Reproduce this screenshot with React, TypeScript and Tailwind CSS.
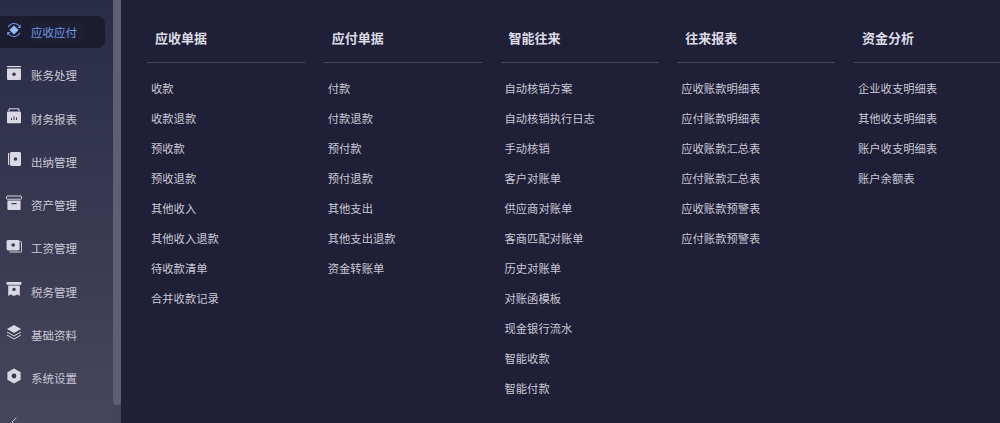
import { ChevronLeft } from 'lucide-react'
import type { ReactNode } from 'react'

const font = { fontFamily: '"Noto Sans CJK SC", "Liberation Sans", sans-serif' }
const ic = '#d9d8e4'
const bg = '#3a3a52'

// sidebar icons, all drawn on a 16x16 box
const icons: Record<string, ReactNode> = {
  active: (
    <>
      <path d="M2.2 5.4A6.6 6.6 0 0 1 13.6 4.2M13.8 10.6A6.6 6.6 0 0 1 2.4 11.8" fill="none" stroke="#6f95e8" strokeWidth="1.1" />
      <path d="M14.8 2.4V6H11.4ZM1.2 13.6V10H4.6Z" fill="#6f95e8" />
      <path d="M8 3.4 12.6 8 8 12.6 3.4 8Z" fill="#9cbcfc" />
    </>
  ),
  account: (
    <>
      <rect x="1" y="1" width="14" height="1.2" fill={ic} />
      <rect x="1" y="3.4" width="14" height="11.6" rx="1" fill={ic} />
      <circle cx="8" cy="9.2" r="1.8" fill={bg} />
    </>
  ),
  report: (
    <>
      <path d="M3 3V1.6A1 1 0 0 1 4 .8h8a1 1 0 0 1 1 .8V3" fill="none" stroke={ic} strokeWidth="1.1" />
      <rect x="1" y="3.6" width="14" height="11.6" rx="1" fill={ic} />
      <path d="M5.5 12V10M8 12V8.4M10.5 12V9.4" stroke={bg} strokeWidth="1" />
    </>
  ),
  cashier: (
    <>
      <rect x="4" y="1" width="11" height="14" rx="1.4" fill={ic} />
      <path d="M2.6 2v12" stroke={ic} strokeWidth="1.2" />
      <circle cx="9.5" cy="8" r="1.8" fill={bg} />
    </>
  ),
  asset: (
    <>
      <rect x="0.6" y="1" width="14.8" height="3.2" rx="0.6" fill="none" stroke={ic} strokeWidth="1" />
      <path d="M1.4 5.4h13.2V14a1 1 0 0 1-1 1H2.4a1 1 0 0 1-1-1Z" fill={ic} />
      <path d="M5.5 8.6h5" stroke={bg} strokeWidth="1.2" />
    </>
  ),
  salary: (
    <>
      <path d="M14 3.4h.6a1 1 0 0 1 1 1V13a1 1 0 0 1-1 1H3.4" fill="none" stroke={ic} strokeWidth="1" />
      <rect x="0.6" y="2" width="13" height="10.4" rx="1.4" fill={ic} />
      <circle cx="7.2" cy="7" r="1.8" fill={bg} />
    </>
  ),
  tax: (
    <>
      <rect x="0.6" y="1" width="14.8" height="2.8" fill={ic} />
      <path d="M2.2 4.6h11.6V15l-2.4-1.4L8 15l-3.4-1.4L2.2 15Z" fill={ic} />
      <circle cx="8" cy="8.4" r="1.7" fill={bg} />
    </>
  ),
  base: (
    <>
      <path d="M8 1 15 5 8 9 1 5Z" fill={ic} />
      <path d="M1 8l7 4 7-4M1 11l7 4 7-4" fill="none" stroke={ic} strokeWidth="1" />
    </>
  ),
  setting: (
    <>
      <path d="M8 .6 14.6 4.2V11.8L8 15.4 1.4 11.8V4.2Z" fill={ic} />
      <circle cx="8" cy="8" r="2.4" fill={bg} />
    </>
  ),
}

const menu = [
  { id: 'active', label: '应收应付' },
  { id: 'account', label: '账务处理' },
  { id: 'report', label: '财务报表' },
  { id: 'cashier', label: '出纳管理' },
  { id: 'asset', label: '资产管理' },
  { id: 'salary', label: '工资管理' },
  { id: 'tax', label: '税务管理' },
  { id: 'base', label: '基础资料' },
  { id: 'setting', label: '系统设置' },
]

const columns = [
  { title: '应收单据', items: ['收款', '收款退款', '预收款', '预收退款', '其他收入', '其他收入退款', '待收款清单', '合并收款记录'] },
  { title: '应付单据', items: ['付款', '付款退款', '预付款', '预付退款', '其他支出', '其他支出退款', '资金转账单'] },
  { title: '智能往来', items: ['自动核销方案', '自动核销执行日志', '手动核销', '客户对账单', '供应商对账单', '客商匹配对账单', '历史对账单', '对账函模板', '现金银行流水', '智能收款', '智能付款'] },
  { title: '往来报表', items: ['应收账款明细表', '应付账款明细表', '应收账款汇总表', '应付账款汇总表', '应收账款预警表', '应付账款预警表'] },
  { title: '资金分析', items: ['企业收支明细表', '其他收支明细表', '账户收支明细表', '账户余额表'] },
]

export default function App() {
  return (
    <div className="flex h-[423px] w-[1000px] overflow-hidden bg-[#1f2037]" style={font}>
      {/* Sidebar */}
      <aside className="flex w-[113px] shrink-0 flex-col bg-gradient-to-b from-[#2a2b46] to-[#46465c] pt-4">
        {menu.map((item, i) => (
          <div key={item.id} className={`mb-[11.25px] flex h-8 w-[105px] shrink-0 items-center rounded-r-lg pl-[6px] ${i === 0 ? 'bg-[#1c1c30]' : ''}`}>
            <svg viewBox="0 0 16 16" className="mb-[5px] h-4 w-4 shrink-0">{icons[item.id]}</svg>
            <span className={`ml-[9px] rounded-r-lg pr-2 text-[11.5px] leading-[20px] ${i === 0 ? 'bg-[#1f1f33] text-[#6f97ea]' : 'text-[#c9c8d4]'}`}>{item.label}</span>
          </div>
        ))}
        <ChevronLeft className="mt-[9px] ml-[6px] h-4 w-4 shrink-0 text-[#c9c8d4]" strokeWidth={1.5} />
      </aside>

      {/* Scrollbar */}
      <div className="w-2 shrink-0 bg-[#44445a]">
        <div className="h-[405px] rounded-b-md bg-[#5f5f73]" />
      </div>

      {/* Menu columns */}
      <main className="flex min-w-0 flex-1 gap-[18.75px] pl-[26px]">
        {columns.map((col) => (
          <section key={col.title} className="w-[158px] shrink-0">
            <h3 className="mt-[27px] h-[36px] border-b border-[#45455a] pl-2 text-[13px] leading-[22px] font-bold text-[#dcdbe6]">{col.title}</h3>
            <ul className="mt-[11px] pl-1">
              {col.items.map((text) => (
                <li key={text} className="h-[30px] text-[11.3px] leading-[29px] text-[#c9c8d6]">{text}</li>
              ))}
            </ul>
          </section>
        ))}
      </main>
    </div>
  )
}
